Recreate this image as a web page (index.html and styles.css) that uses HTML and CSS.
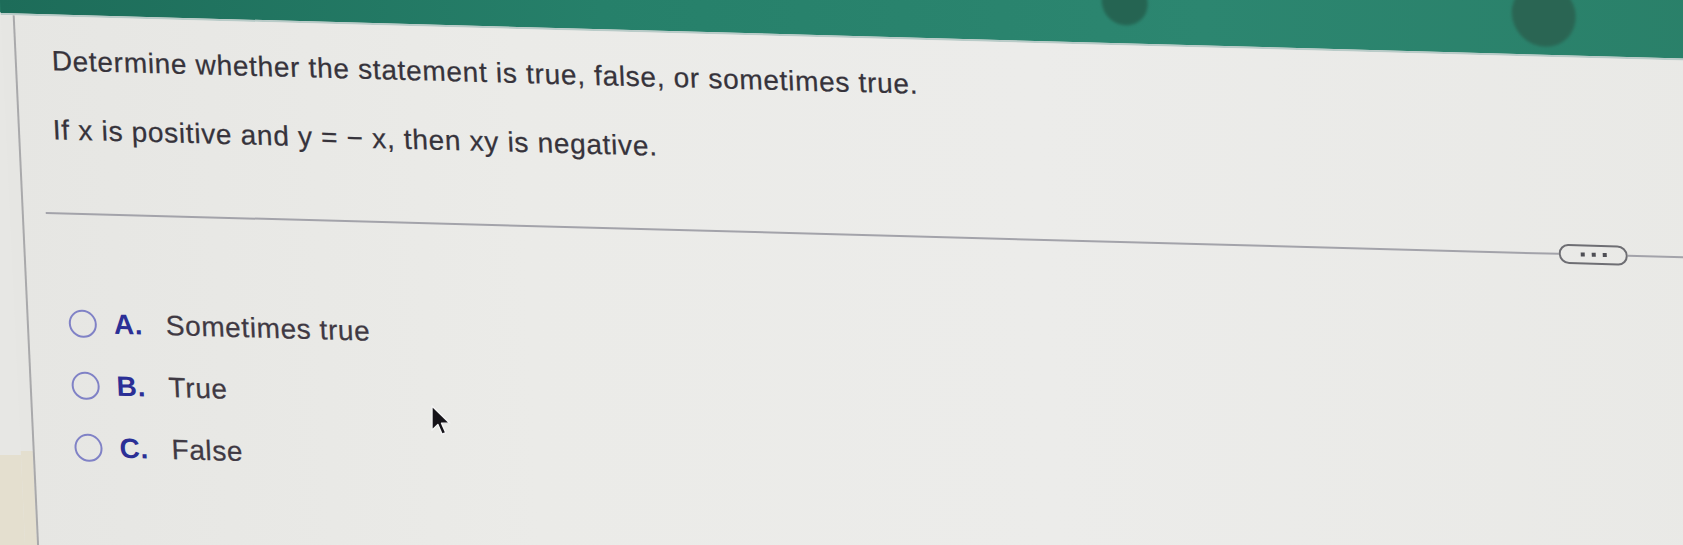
FILE: index.html
```html
<!DOCTYPE html>
<html lang="en">
<head>
<meta charset="utf-8">
<title>Question</title>
<link rel="stylesheet" href="styles.css">
</head>
<body>
<div class="screen">
  <header class="topbar">
    <span class="blob blob-one"></span>
    <span class="blob blob-two"></span>
  </header>
  <div class="panel">
    <div class="edge"></div>
    <main class="content">
      <p class="prompt">Determine whether the statement is true, false, or sometimes true.</p>
      <p class="statement">If x is positive and y = − x, then xy is negative.</p>
      <div class="divider">
        <span class="rule rule-main"></span>
        <button class="more" type="button"><i></i><i></i><i></i></button>
        <span class="rule rule-tail"></span>
      </div>
      <ul class="choices">
        <li class="choice"><span class="radio"></span><span class="letter">A.</span><span class="answer">Sometimes true</span></li>
        <li class="choice"><span class="radio"></span><span class="letter">B.</span><span class="answer">True</span></li>
        <li class="choice"><span class="radio"></span><span class="letter">C.</span><span class="answer">False</span></li>
      </ul>
    </main>
  </div>
</div>
<svg class="cursor" viewBox="0 0 16 25" width="21" height="33" aria-hidden="true">
  <path d="M1.5 1.5 L1.5 20 L6 15.5 L9.2 23 L12 21.8 L8.8 14.5 L15 14.5 Z" fill="#151318" stroke="#f4f4f4" stroke-width="1.1" stroke-linejoin="round"/>
</svg>
</body>
</html>
```

FILE: styles.css
```css
html, body {
  margin: 0;
  padding: 0;
  height: 545px;
  overflow: hidden;
}

body {
  position: relative;
  background: linear-gradient(to bottom, #2a8069 0, #2a8069 12px, #e7e7e4 12px, #e7e7e4 455px, #e4dfcf 455px);
  font-family: "Liberation Sans", Arial, Helvetica, sans-serif;
  color: #36333b;
}

.screen {
  width: 1720px;
  margin-top: -100px;
  transform-origin: 0 100px;
  transform: matrix(1, 0.027, 0.046, 1, 0, 0);
}

.topbar {
  height: 113px;
  background: linear-gradient(90deg, #1d6c59 0%, #26806a 35%, #2c8670 70%, #2a8069 100%);
  border-bottom: 2px solid #b9cbc8;
  display: flex;
  align-items: flex-end;
}

.blob {
  display: block;
  border-radius: 50%;
  background: #256452;
  filter: blur(1.5px);
}

.blob-one {
  width: 46px;
  height: 46px;
  margin-left: 1103px;
  margin-bottom: 18px;
}

.blob-two {
  width: 64px;
  height: 64px;
  margin-left: 364px;
  margin-bottom: 8px;
  background: #2a6553;
}

.panel {
  display: flex;
  min-height: 560px;
  background: linear-gradient(90deg, #e6e6e3 0%, #ebebe8 30%, #ececea 60%, #e9e9e6 100%);
}

.edge {
  flex: 0 0 12px;
  background: linear-gradient(to bottom, #e6e6e3 0, #e6e6e3 436px, #e4dfcf 436px);
  border-right: 2px solid #a9a9ab;
}

.content {
  flex: 1;
  padding: 29px 0 0 22px;
}

.prompt,
.statement {
  margin: 0 0 0 13px;
  font-size: 28px;
  line-height: 32px;
  letter-spacing: 0.7px;
  -webkit-text-stroke: 0.25px #36333b;
}

.statement {
  margin-top: 37px;
  margin-left: 11px;
}

.divider {
  display: flex;
  align-items: center;
  margin-top: 57px;
  height: 20px;
}

.rule {
  display: block;
  height: 2px;
  background: #a3a3aa;
}

.rule-main {
  flex: 0 0 1513px;
}

.rule-tail {
  flex: 1;
}

.more {
  flex: 0 0 69px;
  height: 20px;
  box-sizing: border-box;
  border: 2px solid #6e6e73;
  border-radius: 10px;
  background: transparent;
  padding: 0;
  display: flex;
  align-items: center;
  justify-content: center;
  gap: 7px;
}

.more i {
  display: block;
  width: 4px;
  height: 4px;
  background: #4f4f55;
}

.choices {
  list-style: none;
  margin: 84px 0 0;
  padding: 0 0 0 18px;
  display: flex;
  flex-direction: column;
  gap: 30px;
}

.choice {
  display: flex;
  align-items: center;
  height: 32px;
  font-size: 28px;
  line-height: 32px;
  letter-spacing: 0.6px;
}

.radio {
  flex: 0 0 28px;
  height: 28px;
  box-sizing: border-box;
  border: 2.5px solid #8082c6;
  border-radius: 50%;
}

.letter {
  flex: 0 0 52px;
  margin-left: 17px;
  font-weight: bold;
  color: #2b2f96;
}

.answer {
  color: #3f3943;
  -webkit-text-stroke: 0.25px #3f3943;
}

.cursor {
  position: absolute;
  left: 430px;
  top: 404px;
  filter: blur(0.6px);
}
```
